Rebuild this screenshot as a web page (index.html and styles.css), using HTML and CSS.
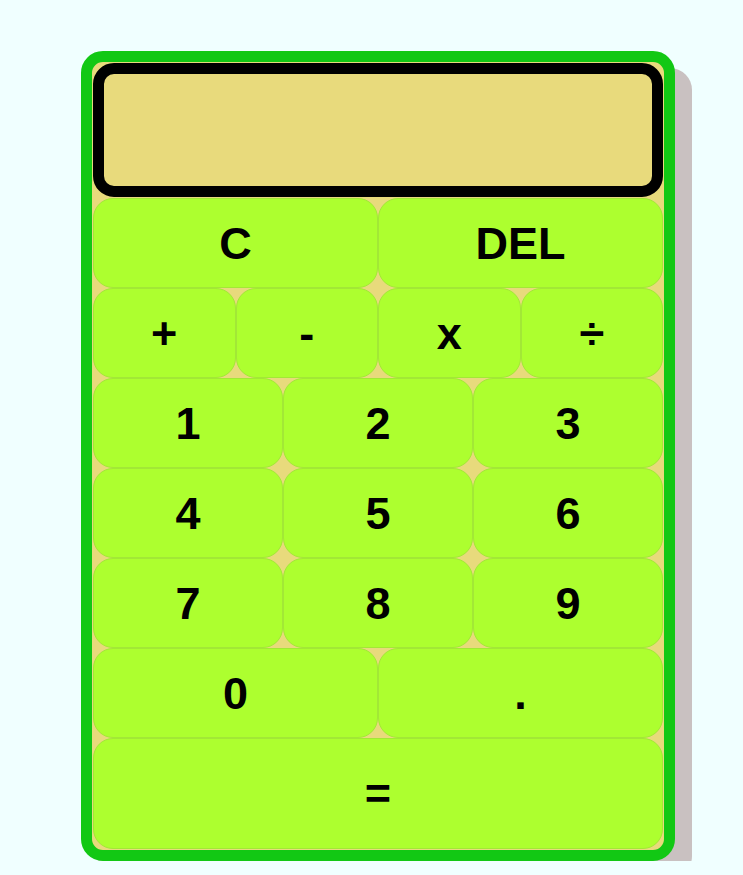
FILE: index.html
```html
<!DOCTYPE html>
<html>
<head>
<meta charset="utf-8">
<link rel="stylesheet" href="styles.css">
</head>
<body>
<div class="calc">
  <div class="display"></div>
  <div class="keys">
    <button class="key span6">C</button>
    <button class="key span6">DEL</button>
    <button class="key span3">+</button>
    <button class="key span3">-</button>
    <button class="key span3">x</button>
    <button class="key span3">÷</button>
    <button class="key span4">1</button>
    <button class="key span4">2</button>
    <button class="key span4">3</button>
    <button class="key span4">4</button>
    <button class="key span4">5</button>
    <button class="key span4">6</button>
    <button class="key span4">7</button>
    <button class="key span4">8</button>
    <button class="key span4">9</button>
    <button class="key span6">0</button>
    <button class="key span6">.</button>
    <button class="key span12">=</button>
  </div>
</div>
</body>
</html>
```
FILE: styles.css
```css
html, body {
  margin: 0;
  padding: 0;
  background: #f0ffff;
  font-family: "Liberation Sans", Arial, sans-serif;
}
body {
  padding: 51px 0 0 81px;
}
.calc {
  width: 570px;
  box-sizing: content-box;
  border: 11px solid #12c814;
  border-radius: 22px;
  background: #e8da7c;
  padding: 1px;
  box-shadow: 17px 17px 0 #c9c1c1;
}
.display {
  height: 112px;
  margin: 0 0 1px 0;
  border: 11px solid #000;
  border-radius: 21px;
  background: #e8da7c;
}
.keys {
  display: grid;
  grid-template-columns: repeat(12, 1fr);
  grid-template-rows: repeat(6, 90px) 111px;
}
.key {
  margin: 0;
  padding: 0;
  background: #adff2f;
  border: 1px solid #a2e836;
  border-radius: 20px;
  font-family: "Liberation Sans", Arial, sans-serif;
  font-weight: bold;
  font-size: 45px;
  color: #000;
  line-height: 1;
}
.span3 { grid-column: span 3; }
.span4 { grid-column: span 4; }
.span6 { grid-column: span 6; }
.span12 { grid-column: span 12; }
```
